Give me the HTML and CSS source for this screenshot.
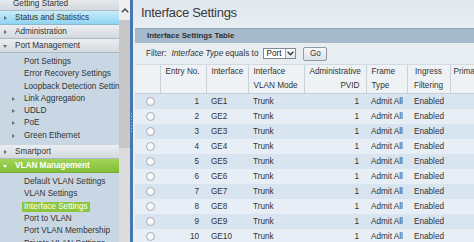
FILE: index.html
```html
<!DOCTYPE html>
<html>
<head>
<meta charset="utf-8">
<link rel="stylesheet" href="styles.css">
</head>
<body>
<div class="app">
  <nav class="sidebar">
    <ul class="menu">
      <li class="top plain">Getting Started</li>
      <li class="top status"><i class="tri-r"></i>Status and Statistics</li>
      <li class="top"><i class="tri-r"></i>Administration</li>
      <li class="top"><i class="tri-d"></i>Port Management</li>
      <li>
        <ul class="sub">
          <li>Port Settings</li>
          <li>Error Recovery Settings</li>
          <li>Loopback Detection Settings</li>
          <li><i class="tri-r sub-tri"></i>Link Aggregation</li>
          <li><i class="tri-r sub-tri"></i>UDLD</li>
          <li><i class="tri-r sub-tri"></i>PoE</li>
          <li><i class="tri-r sub-tri"></i>Green Ethernet</li>
        </ul>
      </li>
      <li class="top"><i class="tri-r"></i>Smartport</li>
      <li class="top vlan"><i class="tri-d white"></i>VLAN Management</li>
      <li>
        <ul class="sub">
          <li>Default VLAN Settings</li>
          <li>VLAN Settings</li>
          <li class="active"><span>Interface Settings</span></li>
          <li>Port to VLAN</li>
          <li>Port VLAN Membership</li>
          <li>Private VLAN Settings</li>
        </ul>
      </li>
    </ul>
  </nav>
  <div class="scroll">
    <div class="sb-btn"><svg width="8" height="5" viewBox="0 0 8 5"><polyline points="0.8,4.2 4,1 7.2,4.2" fill="none" stroke="#444" stroke-width="1.4"/></svg></div>
    <div class="sb-thumb"></div>
    <div class="sb-track"></div>
  </div>
  <div class="divider"><span class="grip"></span></div>
  <main class="content">
    <h1 class="title">Interface Settings</h1>
    <div class="panel">
      <div class="panel-title">Interface Settings Table</div>
      <div class="filter">
        <span>Filter:</span>
        <em class="fl-field">Interface Type</em>
        <span class="fl-eq">equals to</span>
        <span class="select"><span class="sel-val">Port</span><span class="sel-btn"><svg width="7" height="5" viewBox="0 0 7 5"><polyline points="0.6,0.8 3.5,3.8 6.4,0.8" fill="none" stroke="#333" stroke-width="1.3"/></svg></span></span>
        <span class="btn">Go</span>
      </div>
      <table class="grid">
        <colgroup>
          <col class="c-radio"><col class="c-entry"><col class="c-if"><col class="c-mode"><col class="c-pvid"><col class="c-frame"><col class="c-ingress"><col class="c-prim">
        </colgroup>
        <thead>
          <tr>
            <th></th>
            <th class="num">Entry No.</th>
            <th>Interface</th>
            <th>Interface<br>VLAN Mode</th>
            <th class="num">Administrative<br>PVID</th>
            <th>Frame<br>Type</th>
            <th class="ctr">Ingress<br>Filtering</th>
            <th class="prim">Primary VLAN</th>
          </tr>
        </thead>
        <tbody>
          <tr class="odd"><td><span class="radio"></span></td><td class="num">1</td><td>GE1</td><td>Trunk</td><td class="num">1</td><td>Admit All</td><td class="ing">Enabled</td><td></td></tr>
          <tr class="even"><td><span class="radio"></span></td><td class="num">2</td><td>GE2</td><td>Trunk</td><td class="num">1</td><td>Admit All</td><td class="ing">Enabled</td><td></td></tr>
          <tr class="odd"><td><span class="radio"></span></td><td class="num">3</td><td>GE3</td><td>Trunk</td><td class="num">1</td><td>Admit All</td><td class="ing">Enabled</td><td></td></tr>
          <tr class="even"><td><span class="radio"></span></td><td class="num">4</td><td>GE4</td><td>Trunk</td><td class="num">1</td><td>Admit All</td><td class="ing">Enabled</td><td></td></tr>
          <tr class="odd"><td><span class="radio"></span></td><td class="num">5</td><td>GE5</td><td>Trunk</td><td class="num">1</td><td>Admit All</td><td class="ing">Enabled</td><td></td></tr>
          <tr class="even"><td><span class="radio"></span></td><td class="num">6</td><td>GE6</td><td>Trunk</td><td class="num">1</td><td>Admit All</td><td class="ing">Enabled</td><td></td></tr>
          <tr class="odd"><td><span class="radio"></span></td><td class="num">7</td><td>GE7</td><td>Trunk</td><td class="num">1</td><td>Admit All</td><td class="ing">Enabled</td><td></td></tr>
          <tr class="even"><td><span class="radio"></span></td><td class="num">8</td><td>GE8</td><td>Trunk</td><td class="num">1</td><td>Admit All</td><td class="ing">Enabled</td><td></td></tr>
          <tr class="odd"><td><span class="radio"></span></td><td class="num">9</td><td>GE9</td><td>Trunk</td><td class="num">1</td><td>Admit All</td><td class="ing">Enabled</td><td></td></tr>
          <tr class="even"><td><span class="radio"></span></td><td class="num">10</td><td>GE10</td><td>Trunk</td><td class="num">1</td><td>Admit All</td><td class="ing">Enabled</td><td></td></tr>
        </tbody>
      </table>
    </div>
  </main>
</div>
</body>
</html>
```
FILE: styles.css
```css
* { box-sizing: border-box; }
html, body { margin: 0; padding: 0; }
body {
  font-family: "Liberation Sans", Arial, sans-serif;
  font-size: 8.2px;
  color: #333;
  background: #e6edf3;
}
.app {
  display: flex;
  width: 474px;
  height: 242px;
  overflow: hidden;
}

/* ---------- sidebar ---------- */
.sidebar {
  width: 119px;
  flex: none;
  overflow: hidden;
  background: #c9d7e4;
}
.menu {
  list-style: none;
  margin: -3px 0 0;
  padding: 0;
}
.top {
  position: relative;
  height: 14px;
  line-height: 13px;
  padding-left: 15px;
  white-space: nowrap;
  background: linear-gradient(#eceff2, #d3d9de);
  border-bottom: 1px solid #aeb8c2;
  color: #333;
}
.top.plain { padding-left: 13px; }
.top.status {
  background: linear-gradient(#c9edfa, #8ed3f1);
  border-bottom-color: #8fb7cc;
}
.top.vlan {
  background: linear-gradient(#a1d45a, #83bf36);
  color: #fff;
  font-weight: bold;
  border-bottom-color: #78a83a;
}
.sub {
  list-style: none;
  margin: 0;
  padding: 3px 0;
  background: #c9d7e4;
}
.sub li {
  position: relative;
  height: 12.3px;
  line-height: 12.3px;
  padding-left: 24px;
  white-space: nowrap;
  color: #333;
}
.sub li.active span {
  display: inline-block;
  background: #8cc63f;
  color: #fff;
  padding: 0 2px;
  margin-left: -2px;
  line-height: 10px;
}
.tri-r, .tri-d {
  position: absolute;
  width: 0;
  height: 0;
}
.tri-r {
  left: 4px;
  top: 4.5px;
  border-left: 3px solid #6a6f75;
  border-top: 2px solid transparent;
  border-bottom: 2px solid transparent;
}
.tri-d {
  left: 3px;
  top: 5.5px;
  border-top: 3px solid #6a6f75;
  border-left: 2px solid transparent;
  border-right: 2px solid transparent;
}
.tri-d.white { border-top-color: #fff; }
.sub-tri { left: 12px; top: 4px; }

/* ---------- scrollbar ---------- */
.scroll {
  width: 11px;
  flex: none;
  display: flex;
  flex-direction: column;
  background: #dedede;
}
.sb-btn {
  height: 20px;
  display: flex;
  align-items: center;
  justify-content: center;
  background: #eeeeee;
}
.sb-thumb {
  height: 128px;
  background: #c7c7c7;
}
.sb-track {
  flex: 1;
  background: #dcdcdc;
}
.divider {
  width: 3px;
  flex: none;
  background: #4777b0;
  display: flex;
  align-items: flex-start;
  justify-content: center;
  padding-top: 113px;
}
.grip {
  width: 1px;
  height: 20px;
  background: repeating-linear-gradient(#a9c6e6 0 1px, transparent 1px 3px);
}

/* ---------- content ---------- */
.content {
  flex: 1;
  overflow: hidden;
  background: linear-gradient(#dfe8ef, #e8eef3 30px, #e8eef3);
}
.title {
  margin: 0;
  height: 28px;
  padding: 0 0 3px 8px;
  line-height: 25px;
  font-size: 13px;
  font-weight: normal;
  letter-spacing: -0.3px;
  color: #3a3a3a;
  white-space: nowrap;
}
.panel {
  margin-left: 2px;
  width: 360px;
}
.panel-title {
  height: 15px;
  line-height: 14px;
  padding-left: 12px;
  background: #a7bacb;
  border-top: 1px solid #8fa4b7;
  font-weight: bold;
  font-size: 7.8px;
  color: #2f2f2f;
  white-space: nowrap;
}
.filter {
  height: 21px;
  display: flex;
  align-items: center;
  padding-left: 11px;
  background: #e8edf1;
  white-space: nowrap;
}
.fl-field { margin-left: 5px; }
.fl-eq { margin-left: 2px; }
.select {
  margin-left: 5px;
  width: 33px;
  height: 11px;
  border: 1px solid #7d8994;
  background: #fff;
  display: flex;
  justify-content: space-between;
  align-items: stretch;
}
.sel-val {
  padding-left: 2px;
  line-height: 9px;
  color: #222;
}
.sel-btn {
  width: 10px;
  border-left: 1px solid #9aa5b0;
  background: linear-gradient(#fafbfc, #e3e8ec);
  display: flex;
  align-items: center;
  justify-content: center;
}
.btn {
  margin-left: 7px;
  width: 24px;
  height: 14px;
  border: 1px solid #8f9ba6;
  border-radius: 2px;
  background: linear-gradient(#f7f8f9, #dde2e6);
  text-align: center;
  line-height: 12px;
  color: #333;
}
.grid {
  border-collapse: collapse;
  table-layout: fixed;
  width: 355px;
}
.c-radio { width: 25px; }
.c-entry { width: 46px; }
.c-if { width: 42px; }
.c-mode { width: 56px; }
.c-pvid { width: 62px; }
.c-frame { width: 41px; }
.c-ingress { width: 43px; }
.c-prim { width: 40px; }
.grid th {
  height: 29px;
  padding: 0 5px;
  vertical-align: top;
  line-height: 14px;
  font-weight: normal;
  text-align: left;
  color: #333;
  background: #eef2f5;
  border-left: 1px solid #c9d2da;
  border-top: 1px solid #d3dbe2;
  border-bottom: 1px solid #c6d0d9;
  white-space: nowrap;
}
.grid th:first-child { border-left: none; }
.grid th.num { text-align: right; padding-right: 6px; }
.grid th.ctr { text-align: center; }
.grid th.prim { padding-left: 3px; }
.grid td {
  height: 15px;
  padding: 0 5px;
  line-height: 15px;
  white-space: nowrap;
  color: #333;
}
.grid td.num { text-align: right; padding-right: 7px; }
.grid td.ing { padding-left: 7px; }
.grid tr.odd td { background: #d8e4ef; }
.grid tr.even td { background: #e7eef5; }
.radio {
  display: inline-block;
  width: 9px;
  height: 9px;
  margin-left: 6px;
  margin-top: 3px;
  vertical-align: top;
  border: 1px solid #a3acb4;
  border-radius: 50%;
  background: radial-gradient(circle at 40% 35%, #ffffff, #eef0f2);
}
```
